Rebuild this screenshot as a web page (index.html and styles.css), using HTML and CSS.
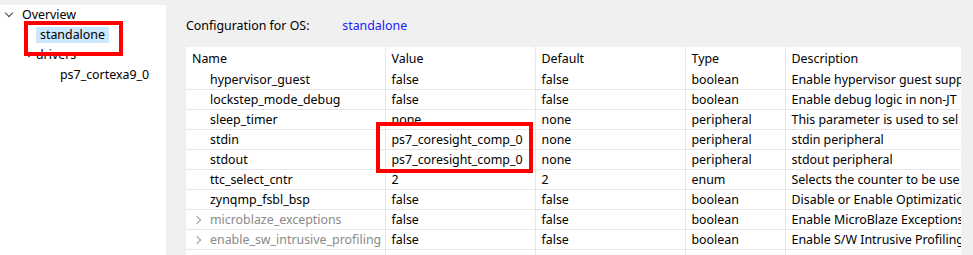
FILE: index.html
```html
<!DOCTYPE html>
<html lang="en">
<head>
    <meta charset="UTF-8">
    <title>Board Support Package Settings</title>
    <link rel="stylesheet" href="styles.css">
</head>
<body>
    <div class="page">
        <div class="sidebar">
            <ul class="tree">
                <li class="tree-item"><span class="chev open"></span>Overview</li>
                <li class="tree-item level1"><span class="selected">standalone</span></li>
                <li class="tree-item level1"><span class="chev open small"></span>drivers</li>
                <li class="tree-item level2">ps7_cortexa9_0</li>
            </ul>
            <div class="mark mark-os"></div>
        </div>

        <div class="main">
            <div class="config-line">
                <span class="config-label">Configuration for OS:</span>
                <span class="config-value">standalone</span>
            </div>

            <div class="table-wrap">
                <table class="params">
                    <colgroup>
                        <col style="width: 199px">
                        <col style="width: 150px">
                        <col style="width: 150px">
                        <col style="width: 100px">
                        <col>
                    </colgroup>
                    <thead>
                        <tr>
                            <th>Name</th>
                            <th>Value</th>
                            <th>Default</th>
                            <th>Type</th>
                            <th>Description</th>
                        </tr>
                    </thead>
                    <tbody>
                        <tr><td class="name">hypervisor_guest</td><td>false</td><td>false</td><td>boolean</td><td>Enable hypervisor guest supp</td></tr>
                        <tr><td class="name">lockstep_mode_debug</td><td>false</td><td>false</td><td>boolean</td><td>Enable debug logic in non-JT</td></tr>
                        <tr><td class="name">sleep_timer</td><td>none</td><td>none</td><td>peripheral</td><td>This parameter is used to sel</td></tr>
                        <tr><td class="name">stdin</td><td>ps7_coresight_comp_0</td><td>none</td><td>peripheral</td><td>stdin peripheral</td></tr>
                        <tr><td class="name">stdout</td><td>ps7_coresight_comp_0</td><td>none</td><td>peripheral</td><td>stdout peripheral</td></tr>
                        <tr><td class="name">ttc_select_cntr</td><td>2</td><td>2</td><td>enum</td><td>Selects the counter to be use</td></tr>
                        <tr><td class="name">zynqmp_fsbl_bsp</td><td>false</td><td>false</td><td>boolean</td><td>Disable or Enable Optimizatio</td></tr>
                        <tr class="group"><td class="name"><span class="chev closed"></span>microblaze_exceptions</td><td>false</td><td>false</td><td>boolean</td><td>Enable MicroBlaze Exceptions</td></tr>
                        <tr class="group"><td class="name"><span class="chev closed"></span>enable_sw_intrusive_profiling</td><td>false</td><td>false</td><td>boolean</td><td>Enable S/W Intrusive Profiling</td></tr>
                    </tbody>
                </table>
                <div class="table-tail"></div>
                <div class="mark mark-stdio"></div>
            </div>
        </div>
    </div>
</body>
</html>
```

FILE: styles.css
```css
html, body {
    overflow: hidden;
}

body {
    margin: 0;
    background-color: #f0f0f0;
    font-family: "Noto Sans", "Noto Sans CJK SC", sans-serif;
    font-size: 12.4px;
    color: #000;
}

.page {
    display: flex;
    height: 255px;
    overflow: hidden;
}

.sidebar {
    position: relative;
    width: 166px;
    margin-top: 5px;
    background-color: #fff;
}

.tree {
    list-style: none;
    margin: 0;
    padding: 0;
}

.tree-item {
    position: relative;
    height: 20px;
    line-height: 20px;
    padding-left: 22px;
    white-space: nowrap;
}

.tree-item.level1 {
    padding-left: 36px;
}

.tree-item.level2 {
    padding-left: 60px;
}

.selected {
    display: inline-block;
    height: 16px;
    line-height: 16px;
    padding: 0 4px;
    background-color: #cce8ff;
}

.chev {
    position: absolute;
    width: 5px;
    height: 5px;
    border-right: 1.5px solid #404040;
    border-bottom: 1.5px solid #404040;
}

.tree-item > .chev {
    left: 6px;
    top: 5px;
    transform: rotate(45deg);
}

.tree-item.level1 > .chev {
    left: 26px;
}

.chev.closed {
    left: 8px;
    top: 7px;
    border-color: #9a9a9a;
    transform: rotate(-45deg);
}

.main {
    flex: 1;
    padding-left: 20px;
}

.config-line {
    height: 42px;
    line-height: 42px;
    padding-top: 5px;
    box-sizing: border-box;
}

.config-label {
    display: inline-block;
    width: 153px;
}

.config-value {
    color: #1a1aff;
}

.table-wrap {
    position: relative;
    width: 775px;
    margin-top: 5px;
}

.params {
    width: 775px;
    table-layout: fixed;
    border-collapse: collapse;
    background-color: #fff;
}

.params th,
.params td {
    height: 19px;
    padding: 0 0 0 6px;
    border-left: 1px solid #e6e6e6;
    border-bottom: 1px solid #e6e6e6;
    font-weight: normal;
    text-align: left;
    white-space: nowrap;
    overflow: hidden;
}

.params th {
    height: 23px;
    border-bottom: none;
}

.params th:first-child,
.params td:first-child {
    border-left: none;
}

.params td.name {
    position: relative;
    padding-left: 24px;
}

.group td.name {
    color: #8a8a8a;
}

.table-tail {
    height: 20px;
    background-color: #fff;
    background-image: linear-gradient(#e6e6e6, #e6e6e6), linear-gradient(#e6e6e6, #e6e6e6), linear-gradient(#e6e6e6, #e6e6e6), linear-gradient(#e6e6e6, #e6e6e6);
    background-size: 1px 100%;
    background-repeat: no-repeat;
    background-position: 199px 0, 349px 0, 499px 0, 599px 0;
}

.mark {
    position: absolute;
    border: 4px solid #f00;
    box-sizing: border-box;
}

.mark-os {
    left: 24px;
    top: 16px;
    width: 99px;
    height: 35px;
}

.mark-stdio {
    left: 190px;
    top: 75px;
    width: 157px;
    height: 51px;
}
```
